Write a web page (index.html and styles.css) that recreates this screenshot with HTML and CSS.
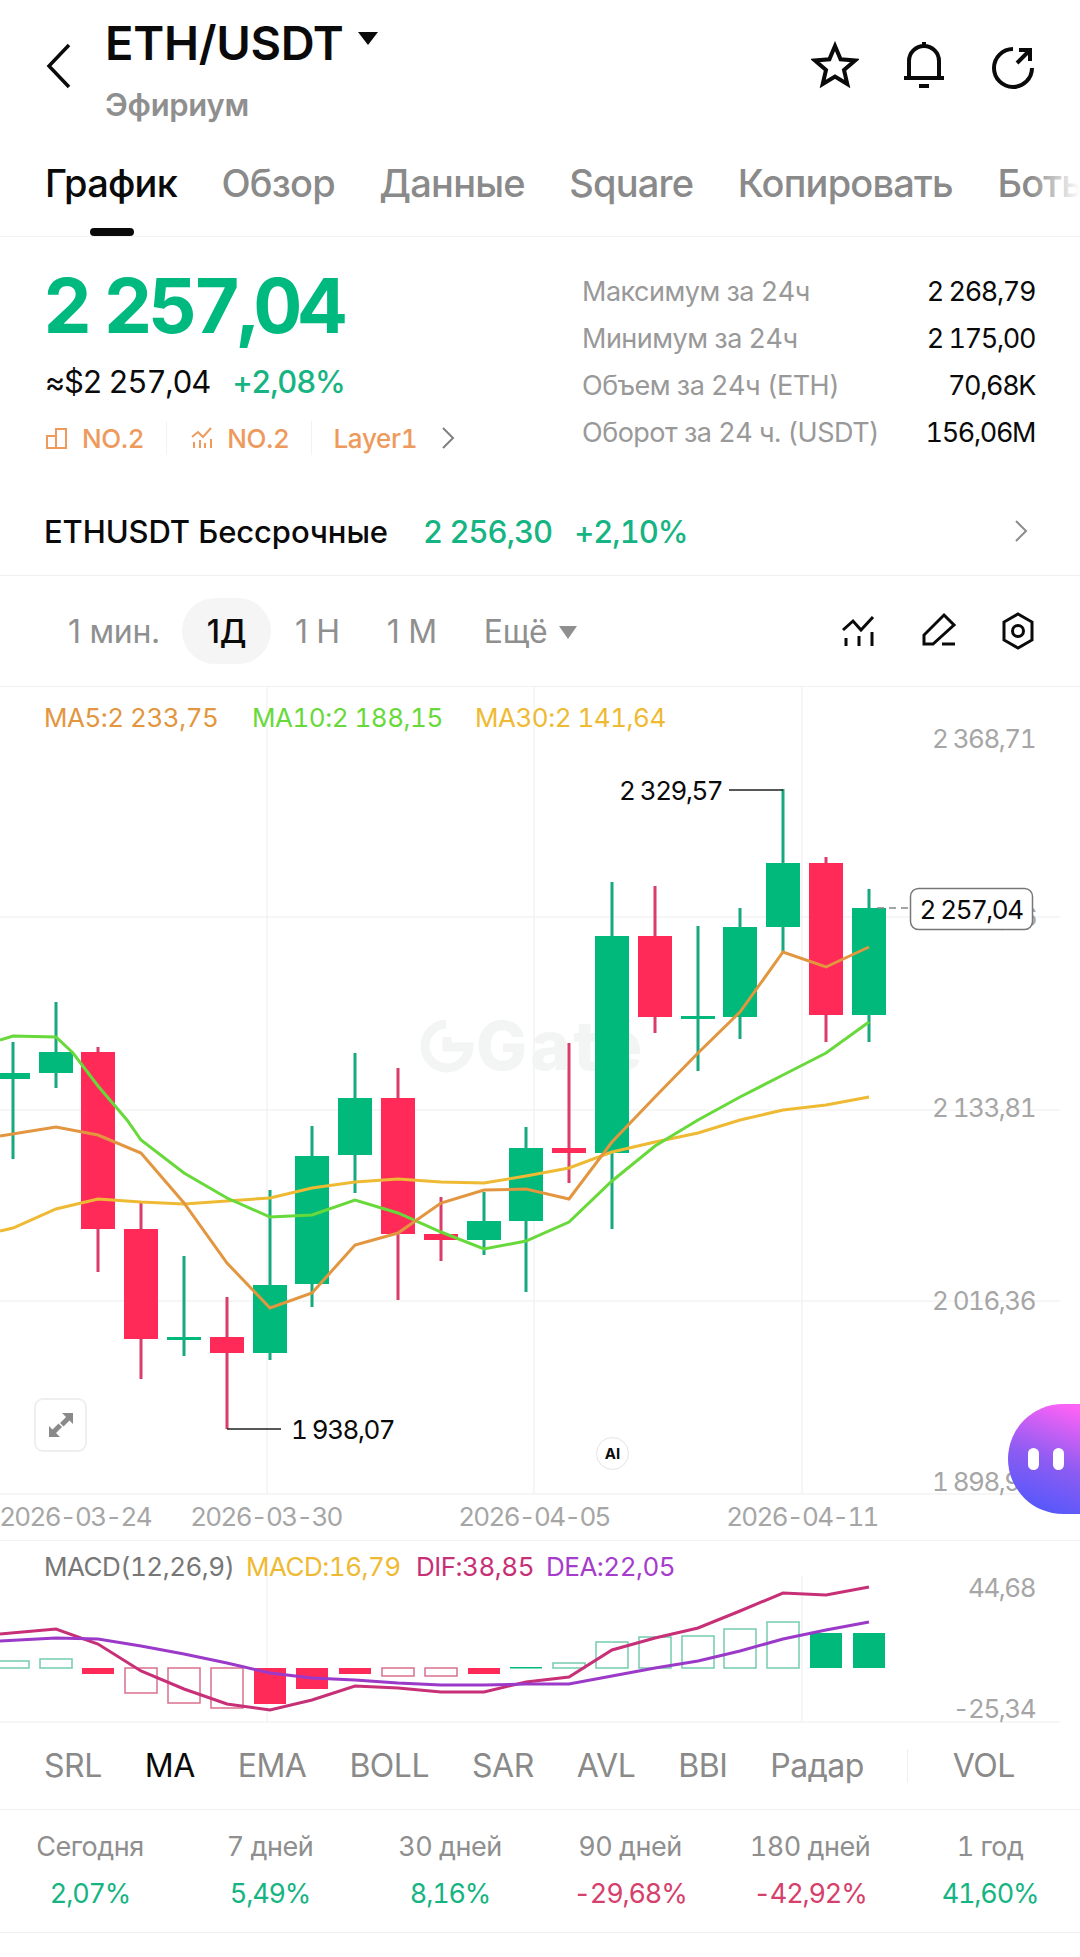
FILE: index.html
```html
<!DOCTYPE html>
<html lang="ru">
<head>
    <meta charset="UTF-8">
    <meta name="viewport" content="width=device-width, initial-scale=1.0">
    <title>ETH/USDT</title>
    <link rel="stylesheet" href="styles.css">
</head>
<body>

    <header class="topbar">
        <svg class="back" viewBox="0 0 30 48"><path d="M25 4 5 25l20 21"/></svg>
        <div class="pair">
            <div class="pair-name">ETH/USDT <span class="pair-caret"></span></div>
            <div class="pair-sub">Эфириум</div>
        </div>
        <div class="actions">
            <svg class="icon-lg" viewBox="0 0 48 48"><path d="M24 5l5.600 13.300L44 19.500l-11 9.400L36.300 43 24 35.500 11.700 43 15 28.900 4 19.500l14.400-1.200z"/></svg>
            <svg class="icon-lg" viewBox="0 0 48 48"><path d="M24 1v4M9 37V20a15 15 0 0 1 30 0v17M4 37h40M19 45h10"/></svg>
            <svg class="icon-lg" viewBox="0 0 48 48"><path d="M24 8A19 19 0 1 0 43 27M28 22 41 9M30 9h11v11"/></svg>
        </div>
    </header>

    <nav class="tabs">
        <a class="tab active">График</a>
        <a class="tab">Обзор</a>
        <a class="tab">Данные</a>
        <a class="tab">Square</a>
        <a class="tab">Копировать</a>
        <a class="tab">Боты</a>
        <span class="tab-mark"></span>
        <span class="tab-fade"></span>
    </nav>

    <section class="summary">
        <div class="quote">
            <div class="price">2 257,04</div>
            <div class="sub-price">≈$2 257,04 <span class="up-text">+2,08%</span></div>
            <div class="tags">
                <svg class="tag-icon" viewBox="0 0 24 24"><path d="M2 10h9v12H2zM11 3h10v19H11z"/></svg>
                <span>NO.2</span>
                <i class="tag-sep"></i>
                <svg class="tag-icon" viewBox="0 0 24 24"><path d="M2 11l6-5 5 5 8-9M4 16v6M10 14v8M15 17v5M21 13v9"/></svg>
                <span>NO.2</span>
                <i class="tag-sep tag-sep-last"></i>
                <span>Layer1</span>
                <svg class="tag-more" viewBox="0 0 14 24"><path d="M2 2l10 10L2 22"/></svg>
            </div>
        </div>
        <dl class="stats">
            <div class="stat"><dt>Максимум за 24ч</dt><dd>2 268,79</dd></div>
            <div class="stat"><dt>Минимум за 24ч</dt><dd>2 175,00</dd></div>
            <div class="stat"><dt>Объем за 24ч (ETH)</dt><dd>70,68K</dd></div>
            <div class="stat"><dt>Оборот за 24 ч. (USDT)</dt><dd>156,06M</dd></div>
        </dl>
    </section>

    <section class="perp">
        <span class="perp-name">ETHUSDT Бессрочные</span>
        <span class="perp-price up-text">2 256,30</span>
        <span class="perp-change up-text">+2,10%</span>
        <svg class="perp-more" viewBox="0 0 14 24"><path d="M2 2l10 10L2 22"/></svg>
    </section>

    <section class="timeframes">
        <span class="tf">1 мин.</span>
        <span class="tf active">1Д</span>
        <span class="tf">1 Н</span>
        <span class="tf">1 М</span>
        <span class="tf tf-more">Ещё <i class="tf-caret"></i></span>
        <div class="tools">
            <svg class="icon-md" viewBox="0 0 40 40"><path d="M4 19l10-9 8 9L34 6M7 27v8M20 25v10M33 21v14"/></svg>
            <svg class="icon-md" viewBox="0 0 40 40"><path d="M25 4l10 10-21 19H5v-9zM23 33h13"/></svg>
            <svg class="icon-md" viewBox="0 0 40 40"><path d="M19 3l14 8v18l-14 8-14-8V11z"/><circle cx="19" cy="20" r="5.500"/></svg>
        </div>
    </section>

    <section class="chart">
        <svg class="chart-svg" width="1080" height="853" viewBox="0 687 1080 853">
            <!-- grid -->
            <path class="grid" d="M267 687V1494M534 687V1494M802 687V1494M0 917H1060M0 1110H1060M0 1301H1060M0 1494H1080"/>

            <!-- watermark -->
            <path class="mark-ring" d="M446 1024a22 22 0 1 0 23 23h-22v-10"/>
            <text class="mark-text" x="476" y="1070">Gate</text>

            <!-- candles -->
            <path class="wick-up" d="M13 1042V1159M56 1002V1088M184 1256V1356M270 1190V1360M312 1126V1307M355 1053V1193M484 1192V1255M526 1127V1292M612 882V1229M698 926V1071M740 908V1039M783 789V952M869 889V1042"/>
            <path class="wick-down" d="M98 1047V1272M141 1203V1379M227 1297V1429M398 1068V1300M441 1197V1261M569 1043V1183M655 886V1033M826 857V1042"/>
            <g class="body-up">
                <rect x="-4" y="1073" width="34" height="6"/>
                <rect x="39" y="1052" width="34" height="21"/>
                <rect x="167" y="1337" width="34" height="3"/>
                <rect x="253" y="1285" width="34" height="68"/>
                <rect x="295" y="1156" width="34" height="128"/>
                <rect x="338" y="1098" width="34" height="57"/>
                <rect x="467" y="1221" width="34" height="19"/>
                <rect x="509" y="1148" width="34" height="73"/>
                <rect x="595" y="936" width="34" height="217"/>
                <rect x="681" y="1016" width="34" height="3"/>
                <rect x="723" y="927" width="34" height="90"/>
                <rect x="766" y="863" width="34" height="64"/>
                <rect x="852" y="908" width="34" height="107"/>
            </g>
            <g class="body-down">
                <rect x="81" y="1052" width="34" height="177"/>
                <rect x="124" y="1229" width="34" height="110"/>
                <rect x="210" y="1337" width="34" height="16"/>
                <rect x="381" y="1098" width="34" height="136"/>
                <rect x="424" y="1234" width="34" height="6"/>
                <rect x="552" y="1148" width="34" height="5"/>
                <rect x="638" y="936" width="34" height="81"/>
                <rect x="809" y="863" width="34" height="152"/>
            </g>

            <!-- moving averages -->
            <polyline class="ma30" points="0,1231 13,1228 56,1209 98,1199 141,1202 184,1204 227,1201 270,1198 312,1188 355,1182 398,1179 441,1182 484,1183 526,1176 569,1168 612,1152 655,1142 698,1133 740,1120 783,1110 826,1105 869,1097"/>
            <polyline class="ma10" points="0,1040 13,1036 56,1037 73,1053 98,1086 127,1120 141,1140 184,1173 227,1198 270,1217 312,1215 355,1200 398,1213 441,1232 484,1249 526,1241 569,1222 612,1181 655,1146 698,1120 740,1097 783,1075 826,1053 869,1022"/>
            <polyline class="ma5" points="0,1136 56,1127 98,1135 141,1153 184,1203 227,1263 270,1308 312,1293 355,1245 398,1233 441,1203 484,1190 526,1189 569,1199 612,1142 655,1097 698,1053 740,1012 783,952 826,967 869,947"/>

            <!-- legend -->
            <text class="lbl ma5-text" x="44" y="727">MA5:2 233,75</text>
            <text class="lbl ma10-text" x="252" y="727">MA10:2 188,15</text>
            <text class="lbl ma30-text" x="475" y="727">MA30:2 141,64</text>

            <!-- price axis -->
            <g class="axis">
                <text x="1035" y="748">2 368,71</text>
                <text x="1036" y="926">2 251,26</text>
                <text x="1035" y="1117">2 133,81</text>
                <text x="1035" y="1310">2 016,36</text>
                <text x="1035" y="1491">1 898,91</text>
            </g>

            <!-- date axis -->
            <g class="dates">
                <text x="75" y="1526">2026-03-24</text>
                <text x="266" y="1526">2026-03-30</text>
                <text x="534" y="1526">2026-04-05</text>
                <text x="802" y="1526">2026-04-11</text>
            </g>

            <!-- high and low -->
            <path class="leader" d="M729 790H783M227 1429H281"/>
            <text class="lbl peak" x="619" y="800">2 329,57</text>
            <text class="lbl peak" x="291" y="1439">1 938,07</text>

            <!-- last price -->
            <path class="last-line" d="M877 908H910"/>
            <rect class="last-box" x="910.500" y="888.500" width="122" height="41" rx="8"/>
            <text class="lbl peak" x="971" y="919" text-anchor="middle">2 257,04</text>
        </svg>

        <button class="expand">
            <svg viewBox="0 0 28 28"><path d="M15 2h11v11l-3.500-3.500-6 6-3.500-3.500 6-6zM13 26H2V15l3.500 3.500 6-6 3.500 3.500-6 6z"/></svg>
        </button>
        <span class="ai-badge">AI</span>
        <div class="assistant"><i></i><i></i></div>
    </section>

    <section class="macd">
        <svg class="chart-svg" width="1080" height="182" viewBox="0 1540 1080 182">
            <path class="grid" d="M267 1575V1721M802 1575V1721M0 1721H1060"/>

            <g class="bar-up-line">
                <rect x="-3" y="1660" width="32" height="7"/>
                <rect x="40" y="1658" width="32" height="9"/>
                <rect x="553" y="1662" width="32" height="5"/>
                <rect x="596" y="1641" width="32" height="26"/>
                <rect x="639" y="1636" width="32" height="31"/>
                <rect x="682" y="1635" width="32" height="32"/>
                <rect x="724" y="1628" width="32" height="39"/>
                <rect x="767" y="1621" width="32" height="46"/>
            </g>
            <g class="bar-down-line">
                <rect x="125" y="1667" width="32" height="25"/>
                <rect x="168" y="1667" width="32" height="35"/>
                <rect x="211" y="1667" width="32" height="40"/>
                <rect x="382" y="1667" width="32" height="8"/>
                <rect x="425" y="1667" width="32" height="8"/>
            </g>
            <g class="body-down">
                <rect x="82" y="1667" width="32" height="6"/>
                <rect x="254" y="1667" width="32" height="36"/>
                <rect x="296" y="1667" width="32" height="21"/>
                <rect x="339" y="1667" width="32" height="6"/>
                <rect x="468" y="1667" width="32" height="6"/>
            </g>
            <g class="body-up">
                <rect x="510" y="1666" width="32" height="1.500"/>
                <rect x="810" y="1632" width="32" height="35"/>
                <rect x="853" y="1632" width="32" height="35"/>
            </g>

            <polyline class="dif" points="0,1633 56,1628 98,1643 141,1670 184,1688 227,1703 270,1709 312,1699 355,1685 398,1687 441,1691 484,1691 526,1681 569,1676 612,1649 655,1637 698,1627 740,1610 783,1592 826,1594 869,1586"/>
            <polyline class="dea" points="0,1640 56,1637 98,1638 141,1645 184,1653 227,1662 270,1672 312,1677 355,1679 398,1682 441,1684 484,1684 526,1683 569,1683 612,1675 655,1667 698,1660 740,1650 783,1638 826,1629 869,1621"/>

            <text class="lbl macd-name" x="44" y="1575">MACD(12,26,9)</text>
            <text class="lbl ma30-text" x="246" y="1575">MACD:16,79</text>
            <text class="lbl dif-text" x="416" y="1575">DIF:38,85</text>
            <text class="lbl dea-text" x="546" y="1575">DEA:22,05</text>

            <g class="axis">
                <text x="1035" y="1596">44,68</text>
                <text x="1035" y="1717">-25,34</text>
            </g>
        </svg>
    </section>

    <section class="indicators">
        <span class="ind">SRL</span>
        <span class="ind active">MA</span>
        <span class="ind">EMA</span>
        <span class="ind">BOLL</span>
        <span class="ind">SAR</span>
        <span class="ind">AVL</span>
        <span class="ind">BBI</span>
        <span class="ind">Радар</span>
        <i class="ind-sep"></i>
        <span class="ind">VOL</span>
    </section>

    <section class="periods">
        <div class="period"><span>Сегодня</span><b class="up-text">2,07%</b></div>
        <div class="period"><span>7 дней</span><b class="up-text">5,49%</b></div>
        <div class="period"><span>30 дней</span><b class="up-text">8,16%</b></div>
        <div class="period"><span>90 дней</span><b class="down-text">-29,68%</b></div>
        <div class="period"><span>180 дней</span><b class="down-text">-42,92%</b></div>
        <div class="period"><span>1 год</span><b class="up-text">41,60%</b></div>
    </section>

</body>
</html>
```

FILE: styles.css
```css
* {
    box-sizing: border-box;
}

html, body {
    margin: 0;
    padding: 0;
    background: #fff;
    overflow-x: hidden;
}

body {
    width: 1080px;
    height: 1957px;
    font-family: Inter, "Noto Sans", sans-serif;
    font-variant-numeric: tabular-nums;
    color: #0a0a0a;
}

.up-text {
    color: #17b483;
}

.down-text {
    color: #d5406c;
}

/* top bar */
.topbar {
    display: flex;
    height: 130px;
    padding: 0 43px 0 44px;
}

.back {
    width: 30px;
    height: 48px;
    margin: 41px 31px 0 0;
    fill: none;
    stroke: #0a0a0a;
    stroke-width: 3.500;
}

.pair-name {
    display: flex;
    align-items: center;
    height: 56px;
    margin-top: 14px;
    font-size: 47px;
    font-weight: 600;
    letter-spacing: -0.300px;
    white-space: pre;
}

.pair-caret {
    width: 0;
    height: 0;
    margin: -8px 0 0 2px;
    border-left: 10px solid transparent;
    border-right: 10px solid transparent;
    border-top: 13px solid #0a0a0a;
}

.pair-sub {
    margin-top: 15px;
    font-size: 31px;
    line-height: 40px;
    font-weight: 600;
    letter-spacing: -0.300px;
    color: #8f8f8f;
}

.actions {
    display: flex;
    gap: 41px;
    margin: 41px 0 0 auto;
}

.icon-lg {
    width: 48px;
    height: 48px;
    fill: none;
    stroke: #0a0a0a;
    stroke-width: 4;
}

/* tabs */
.tabs {
    position: relative;
    display: flex;
    gap: 44.500px;
    height: 107px;
    padding-left: 45px;
    overflow: hidden;
    border-bottom: 1px solid #f2f2f2;
}

.tab {
    font-size: 38px;
    line-height: 106px;
    font-weight: 500;
    letter-spacing: -0.800px;
    color: #8a8a8a;
    white-space: nowrap;
}

.tab.active {
    color: #0a0a0a;
}

.tab-mark {
    position: absolute;
    left: 90px;
    bottom: 0;
    width: 44px;
    height: 8px;
    border-radius: 4px;
    background: #0a0a0a;
}

.tab-fade {
    position: absolute;
    right: 0;
    top: 0;
    width: 50px;
    height: 100%;
    background: linear-gradient(to right, rgba(255, 255, 255, 0), #fff);
}

/* price summary */
.summary {
    display: flex;
    justify-content: space-between;
    height: 250px;
    padding: 0 45px;
}

.quote {
    padding-top: 24px;
}

.price {
    height: 88px;
    margin-left: -2px;
    font-size: 76px;
    line-height: 88px;
    font-weight: 700;
    letter-spacing: -4.500px;
    color: #00b97f;
}

.sub-price {
    margin-top: 13px;
    font-size: 31px;
    line-height: 40px;
    letter-spacing: -1.200px;
}

.sub-price .up-text {
    margin-left: 15px;
    font-weight: 500;
}

.tags {
    display: flex;
    align-items: center;
    height: 40px;
    margin-top: 16px;
    font-size: 26px;
    font-weight: 500;
    letter-spacing: -0.300px;
    color: #ee9a5c;
}

.tag-icon {
    width: 24px;
    height: 24px;
    margin-right: 13px;
    fill: none;
    stroke: #ee9a5c;
    stroke-width: 2;
}

.tag-sep {
    width: 1px;
    height: 34px;
    margin: 0 23px 0 22px;
    background: #f2f2f2;
}

.tag-sep-last {
    margin-right: 21px;
}

.tag-more {
    width: 14px;
    height: 24px;
    margin-left: 24px;
    fill: none;
    stroke: #808080;
    stroke-width: 2;
}

.stats {
    width: 453px;
    margin: 31px 0 0;
}

.stat {
    display: flex;
    justify-content: space-between;
    align-items: center;
    height: 47px;
    font-size: 27px;
    letter-spacing: -0.500px;
}

.stat dt {
    color: #999;
}

.stat dd {
    margin: 0;
    letter-spacing: -1.400px;
    color: #0a0a0a;
}

/* perpetual row */
.perp {
    display: flex;
    align-items: center;
    height: 89px;
    padding: 0 52px 0 44px;
    border-bottom: 1px solid #f0f0f0;
    font-size: 31px;
    font-weight: 500;
    letter-spacing: -0.100px;
}

.perp-price {
    margin-left: 35px;
    letter-spacing: -1px;
}

.perp-change {
    margin-left: 22px;
    letter-spacing: -1px;
}

.perp-more {
    width: 14px;
    height: 24px;
    margin-left: auto;
    fill: none;
    stroke: #8c8c8c;
    stroke-width: 2;
}

/* timeframes */
.timeframes {
    display: flex;
    align-items: center;
    height: 111px;
    padding: 0 41px 0 68px;
    border-bottom: 1px solid #f0f0f0;
    font-size: 32px;
    font-variant-numeric: normal;
    letter-spacing: -0.300px;
    color: #8f8f8f;
}

.tf {
    margin-right: 47px;
}

.tf.active {
    display: flex;
    align-items: center;
    justify-content: center;
    width: 89px;
    height: 66px;
    margin: 0 24px 0 -25px;
    border-radius: 33px;
    background: #f5f5f5;
    color: #0a0a0a;
    font-weight: 500;
}

.tf-more {
    display: flex;
    align-items: center;
    margin-right: 0;
}

.tf-caret {
    width: 0;
    height: 0;
    margin: 2px 0 0 12px;
    border-left: 9px solid transparent;
    border-right: 9px solid transparent;
    border-top: 13px solid #8f8f8f;
}

.tools {
    display: flex;
    gap: 40px;
    margin-left: auto;
}

.icon-md {
    width: 40px;
    height: 40px;
    fill: none;
    stroke: #0a0a0a;
    stroke-width: 3;
}

/* chart */
.chart {
    position: relative;
    height: 853px;
}

.chart-svg {
    display: block;
}

.grid {
    fill: none;
    stroke: #f3f3f3;
    stroke-width: 1.500;
}

.mark-ring {
    fill: none;
    stroke: #f3f4f4;
    stroke-width: 9;
}

.mark-text {
    font-size: 68px;
    font-weight: 800;
    letter-spacing: 3px;
    fill: #f3f4f4;
}

.wick-up, .wick-down {
    fill: none;
    stroke-width: 3;
}

.wick-up {
    stroke: #17a880;
}

.wick-down {
    stroke: #d93d69;
}

.body-up {
    fill: #00b97b;
}

.body-down {
    fill: #ff2a58;
}

.ma5, .ma10, .ma30, .dif, .dea {
    fill: none;
    stroke-width: 3;
}

.ma5 {
    stroke: #e2963f;
}

.ma10 {
    stroke: #68d93a;
}

.ma30 {
    stroke: #efba33;
}

.dif {
    stroke: #c72f77;
}

.dea {
    stroke: #9b39c9;
}

.lbl {
    font-size: 26px;
    letter-spacing: -0.500px;
}

.ma5-text {
    fill: #e2963f;
}

.ma10-text {
    fill: #68d93a;
}

.ma30-text {
    fill: #efba33;
}

.dif-text {
    fill: #c72f77;
}

.dea-text {
    fill: #a63ccb;
}

.macd-name {
    fill: #777;
}

.axis text {
    font-size: 26px;
    letter-spacing: -1.500px;
    text-anchor: end;
    fill: #a6a6a6;
}

.dates text {
    font-size: 26px;
    letter-spacing: -1.700px;
    text-anchor: middle;
    fill: #a6a6a6;
}

.peak {
    letter-spacing: -1.500px;
    fill: #0a0a0a;
}

.leader {
    fill: none;
    stroke: #222;
    stroke-width: 1.500;
}

.last-line {
    fill: none;
    stroke: #888;
    stroke-width: 1.500;
    stroke-dasharray: 7 5;
}

.last-box {
    fill: #fff;
    stroke: #777;
    stroke-width: 1.500;
}

.expand {
    position: absolute;
    left: 34px;
    top: 711px;
    display: flex;
    align-items: center;
    justify-content: center;
    width: 53px;
    height: 54px;
    padding: 0;
    border: 2px solid #efefef;
    border-radius: 9px;
    background: #fff;
}

.expand svg {
    width: 28px;
    height: 28px;
    fill: #8a8a8a;
}

.ai-badge {
    position: absolute;
    left: 596px;
    top: 750px;
    width: 33px;
    height: 33px;
    border: 1px solid #e4e4e4;
    border-radius: 50%;
    background: #fff;
    font-size: 15px;
    line-height: 31px;
    font-weight: 700;
    text-align: center;
}

.assistant {
    position: absolute;
    left: 1008px;
    top: 717px;
    display: flex;
    align-items: center;
    gap: 14px;
    width: 72px;
    height: 110px;
    padding-left: 20px;
    border-radius: 55px 0 0 55px;
    background: linear-gradient(200deg, #fb62f6 5%, #8e5cf2 50%, #5558fb 90%);
}

.assistant i {
    width: 11px;
    height: 22px;
    border-radius: 6px;
    background: #fff;
}

.macd {
    height: 182px;
    border-top: 1px solid #f2f2f2;
}

.bar-up-line, .bar-down-line {
    fill: none;
    stroke-width: 1.500;
}

.bar-up-line {
    stroke: #74cbae;
}

.bar-down-line {
    stroke: #d9708e;
}

/* indicator tabs */
.indicators {
    display: flex;
    align-items: center;
    height: 88px;
    padding-left: 44px;
    border-bottom: 1px solid #f0f0f0;
    font-size: 32px;
    letter-spacing: -0.500px;
    color: #8a8a8a;
}

.ind {
    margin-right: 43px;
}

.ind.active {
    color: #0a0a0a;
}

.ind-sep {
    width: 1px;
    height: 34px;
    margin-right: 45px;
    background: #f0f0f0;
}

/* period returns */
.periods {
    display: grid;
    grid-template-columns: repeat(6, 1fr);
    height: 123px;
    padding-top: 19px;
    border-bottom: 1px solid #eee;
}

.period {
    display: flex;
    flex-direction: column;
    align-items: center;
    gap: 11px;
    font-size: 27px;
    line-height: 36px;
    letter-spacing: -0.500px;
    color: #8f8f8f;
}

.period b {
    font-weight: 400;
    letter-spacing: -1.200px;
}
```
